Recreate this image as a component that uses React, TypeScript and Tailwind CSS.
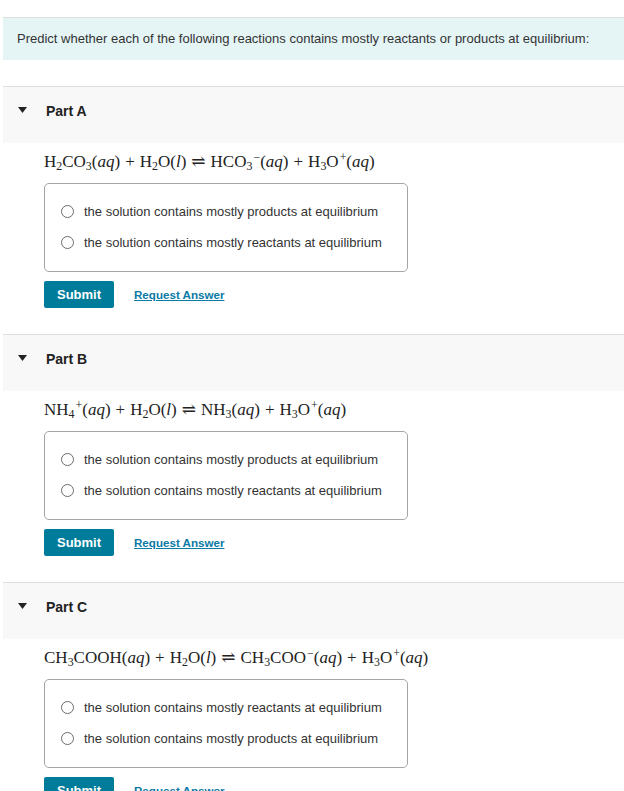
import React from "react";

const Sub = ({ c }: { c: string }) => <sub className="text-[0.7em]">{c}</sub>;
const Sup = ({ c }: { c: string }) => <sup className="text-[0.7em] ml-[1px]">{c}</sup>;
const Op = ({ c }: { c: string }) => <span className="mx-[5px]">{c}</span>;
const I = ({ c }: { c: string }) => <i className="italic">{c}</i>;

function Radio({ label }: { label: string }) {
  return (
    <div className="flex items-center h-[31px]">
      <span className="ml-[16px] w-[13px] h-[13px] rounded-full border border-[#6b6b6b] bg-white shrink-0" />
      <span className="ml-[10px] text-[13px] text-[#333]">{label}</span>
    </div>
  );
}

function Part({
  name,
  eq,
  options,
}: {
  name: string;
  eq: React.ReactNode;
  options: string[];
}) {
  return (
    <div className="mb-[26px]">
      <div className="h-[57px] bg-[#f8f8f8] border-t border-[#dedede] flex items-start pt-[14px]">
        <svg width="9" height="6" viewBox="0 0 9 6" className="ml-[15px] mt-[6px]">
          <path d="M0 0 L9 0 L4.5 6 Z" fill="#222" />
        </svg>
        <span className="ml-[19px] text-[14px] font-bold text-[#222]">{name}</span>
      </div>
      <div className="ml-[41px]">
        <div
          className="mt-[7px] h-[24px] leading-[24px] text-[17px] text-[#222] whitespace-nowrap"
          style={{ fontFamily: '"Liberation Serif", "DejaVu Serif", serif' }}
        >
          {eq}
        </div>
        <div className="mt-[9px] w-[364px] h-[89px] border border-[#a5a5a5] rounded-[5px] pt-[12px]">
          {options.map((o) => (
            <Radio key={o} label={o} />
          ))}
        </div>
        <div className="mt-[9px] flex items-center">
          <button className="w-[70px] h-[27px] bg-[#007c9b] rounded-[2px] text-white text-[13px] font-bold">
            Submit
          </button>
          <a className="ml-[20px] text-[11.6px] font-bold text-[#0a7aa6] underline">Request Answer</a>
        </div>
      </div>
    </div>
  );
}

export default function App() {
  const prod = "the solution contains mostly products at equilibrium";
  const reac = "the solution contains mostly reactants at equilibrium";
  return (
    <div
      className="bg-white w-[624px] h-[791px] overflow-hidden pt-[17px] pl-[3px]"
      style={{ fontFamily: '"Liberation Sans", Arial, sans-serif' }}
    >
      <div className="bg-[#e5f5f6] border-t border-[#dedede] h-[43px] flex items-center pl-[14px]">
        <span className="text-[13px] text-[#333]">
          Predict whether each of the following reactions contains mostly reactants or products at equilibrium:
        </span>
      </div>
      <div className="h-[26px]" />
      <Part
        name="Part A"
        options={[prod, reac]}
        eq={
          <>
            H<Sub c="2" />CO<Sub c="3" />(<I c="aq" />)<Op c="+" />H<Sub c="2" />O(<I c="l" />)
            <Op c="⇌" />HCO<Sub c="3" />
            <Sup c="−" />(<I c="aq" />)<Op c="+" />H<Sub c="3" />O<Sup c="+" />(<I c="aq" />)
          </>
        }
      />
      <Part
        name="Part B"
        options={[prod, reac]}
        eq={
          <>
            NH<Sub c="4" />
            <Sup c="+" />(<I c="aq" />)<Op c="+" />H<Sub c="2" />O(<I c="l" />)<Op c="⇌" />NH<Sub c="3" />(
            <I c="aq" />)<Op c="+" />H<Sub c="3" />O<Sup c="+" />(<I c="aq" />)
          </>
        }
      />
      <Part
        name="Part C"
        options={[reac, prod]}
        eq={
          <>
            CH<Sub c="3" />COOH(<I c="aq" />)<Op c="+" />H<Sub c="2" />O(<I c="l" />)<Op c="⇌" />CH<Sub c="3" />
            COO<Sup c="−" />(<I c="aq" />)<Op c="+" />H<Sub c="3" />O<Sup c="+" />(<I c="aq" />)
          </>
        }
      />
    </div>
  );
}
